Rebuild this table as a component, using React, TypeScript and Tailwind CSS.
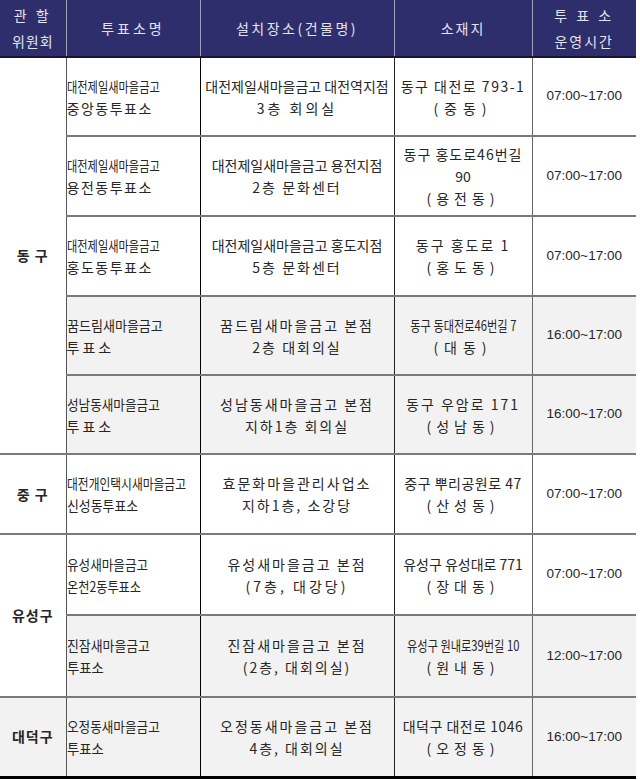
type Line = { t: string; c?: string }

type Row = {
  h: string
  gray?: boolean
  name: Line[]
  place: Line[]
  addr: Line[]
  time: string
}

type Group = { label: string; gray?: boolean; rows: Row[] }

const SQ = "inline-block whitespace-nowrap origin-left scale-x-[0.8]"
const SQ2 = "inline-block whitespace-nowrap origin-left scale-x-[0.9]"
const SQ3 = "inline-block whitespace-nowrap origin-left scale-x-[0.87]"
const WIDE = "inline-block whitespace-nowrap tracking-[1.5px]"

const groups: Group[] = [
  {
    label: "동 구",
    rows: [
      {
        h: "h-[79px]",
        name: [{ t: "대전제일새마을금고", c: SQ }, { t: "중앙동투표소", c: WIDE }],
        place: [{ t: "대전제일새마을금고 대전역지점" }, { t: "3층 회의실", c: "tracking-[3px]" }],
        addr: [{ t: "동구 대전로 793-1", c: "tracking-[1.5px]" }, { t: "(중동)", c: "tracking-[6px]" }],
        time: "07:00~17:00",
      },
      {
        h: "h-[80px]",
        name: [{ t: "대전제일새마을금고", c: SQ }, { t: "용전동투표소", c: WIDE }],
        place: [{ t: "대전제일새마을금고 용전지점" }, { t: "2층 문화센터", c: "tracking-[2px]" }],
        addr: [
          { t: "동구 홍도로46번길", c: "tracking-[1px]" },
          { t: "90" },
          { t: "(용전동)", c: "tracking-[5px]" },
        ],
        time: "07:00~17:00",
      },
      {
        h: "h-[80px]",
        name: [{ t: "대전제일새마을금고", c: SQ }, { t: "홍도동투표소", c: WIDE }],
        place: [{ t: "대전제일새마을금고 홍도지점" }, { t: "5층 문화센터", c: "tracking-[2px]" }],
        addr: [{ t: "동구 홍도로 1", c: "tracking-[2px]" }, { t: "(홍도동)", c: "tracking-[5px]" }],
        time: "07:00~17:00",
      },
      {
        h: "h-[79px]",
        gray: true,
        name: [{ t: "꿈드림새마을금고", c: "inline-block whitespace-nowrap origin-left scale-x-[0.93]" }, { t: "투표소", c: "tracking-[3px]" }],
        place: [{ t: "꿈드림새마을금고 본점", c: "tracking-[2px]" }, { t: "2층 대회의실", c: "tracking-[2px]" }],
        addr: [
          { t: "동구 동대전로46번길 7", c: "inline-block whitespace-nowrap scale-x-[0.8]" },
          { t: "(대동)", c: "tracking-[6px]" },
        ],
        time: "16:00~17:00",
      },
      {
        h: "h-[79px]",
        gray: true,
        name: [{ t: "성남동새마을금고", c: SQ2 }, { t: "투표소", c: "tracking-[3px]" }],
        place: [{ t: "성남동새마을금고 본점", c: "tracking-[2px]" }, { t: "지하1층 회의실", c: "tracking-[2px]" }],
        addr: [{ t: "동구 우암로 171", c: "tracking-[2px]" }, { t: "(성남동)", c: "tracking-[5px]" }],
        time: "16:00~17:00",
      },
    ],
  },
  {
    label: "중 구",
    rows: [
      {
        h: "h-[80px]",
        name: [{ t: "대전개인택시새마을금고", c: "inline-block whitespace-nowrap origin-left scale-x-[0.84]" }, { t: "신성동투표소", c: "inline-block whitespace-nowrap origin-left scale-x-[0.92]" }],
        place: [{ t: "효문화마을관리사업소", c: "tracking-[2px]" }, { t: "지하1층, 소강당", c: "tracking-[2px]" }],
        addr: [{ t: "중구 뿌리공원로 47", c: "tracking-[0.5px]" }, { t: "(산성동)", c: "tracking-[5px]" }],
        time: "07:00~17:00",
      },
    ],
  },
  {
    label: "유성구",
    rows: [
      {
        h: "h-[81px]",
        name: [{ t: "유성새마을금고", c: SQ2 }, { t: "온천2동투표소", c: SQ3 }],
        place: [{ t: "유성새마을금고 본점", c: "tracking-[2px]" }, { t: "(7층, 대강당)", c: "tracking-[3px]" }],
        addr: [{ t: "유성구 유성대로 771", c: "tracking-[0px]" }, { t: "(장대동)", c: "tracking-[5px]" }],
        time: "07:00~17:00",
      },
      {
        h: "h-[82px]",
        gray: true,
        name: [{ t: "진잠새마을금고", c: "inline-block whitespace-nowrap origin-left scale-x-[0.92]" }, { t: "투표소", c: "inline-block whitespace-nowrap origin-left scale-x-[0.95]" }],
        place: [{ t: "진잠새마을금고 본점", c: "tracking-[2px]" }, { t: "(2층, 대회의실)", c: "tracking-[2px]" }],
        addr: [
          { t: "유성구 원내로39번길 10", c: "inline-block whitespace-nowrap scale-x-[0.8]" },
          { t: "(원내동)", c: "tracking-[5px]" },
        ],
        time: "12:00~17:00",
      },
    ],
  },
  {
    label: "대덕구",
    gray: true,
    rows: [
      {
        h: "h-[80px]",
        gray: true,
        name: [{ t: "오정동새마을금고", c: SQ2 }, { t: "투표소", c: "inline-block whitespace-nowrap origin-left scale-x-[0.95]" }],
        place: [{ t: "오정동새마을금고 본점", c: "tracking-[2px]" }, { t: "4층, 대회의실", c: "tracking-[2px]" }],
        addr: [{ t: "대덕구 대전로 1046", c: "tracking-[0.5px]" }, { t: "(오정동)", c: "tracking-[5px]" }],
        time: "16:00~17:00",
      },
    ],
  },
]

function Lines({ lines, left }: { lines: Line[]; left?: boolean }) {
  return (
    <div className={`flex flex-col leading-[22px] ${left ? "items-start" : "items-center"}`}>
      {lines.map((l, i) => (
        <span key={i} className={l.c ?? ""}>
          {l.t}
        </span>
      ))}
    </div>
  )
}

export default function App() {
  return (
    <div className="w-[640px] h-[780px] bg-white text-[#262626] font-['Noto_Sans_CJK_KR',sans-serif] text-[14px]">
      <table className="w-[636px] table-fixed border-collapse">
        <colgroup>
          <col className="w-[66px]" />
          <col className="w-[134px]" />
          <col className="w-[194px]" />
          <col className="w-[138px]" />
          <col className="w-[104px]" />
        </colgroup>
        <thead>
          <tr className="h-[57px] bg-[#2d2e6b] text-[#e4e4ee] text-[14px] leading-[26px]">
            <th className="font-normal border-r border-[#a0a0b8] border-b-2 border-b-[#15153a]">
              <div className="tracking-[3px]">관 할</div>
              <div className="tracking-[1px]">위원회</div>
            </th>
            <th className="font-normal tracking-[3px] border-r border-[#a0a0b8] border-b-2 border-b-[#15153a]">투표소명</th>
            <th className="font-normal tracking-[2.5px] border-r border-[#a0a0b8] border-b-2 border-b-[#15153a]">설치장소(건물명)</th>
            <th className="font-normal tracking-[2px] border-r border-[#a0a0b8] border-b-2 border-b-[#15153a]">소재지</th>
            <th className="font-normal border-b-2 border-b-[#15153a]">
              <div className="tracking-[3px]">투 표 소</div>
              <div className="tracking-[2px]">운영시간</div>
            </th>
          </tr>
        </thead>
        <tbody>
          {groups.map((g, gi) =>
            g.rows.map((r, ri) => {
              const last = gi === groups.length - 1 && ri === g.rows.length - 1
              const bottom = last ? "border-b-[3px] border-b-black" : "border-b-2 border-b-[#7a7a7a]"
              const bg = r.gray ? "bg-[#f2f2f2]" : "bg-white"
              return (
                <tr key={`${gi}-${ri}`} className={r.h}>
                  {ri === 0 && (
                    <td
                      rowSpan={g.rows.length}
                      className={`text-center font-bold text-[14px] tracking-[1px] border-r border-r-[#555] ${
                        last || g.rows.length === 1 ? bottom : "border-b-2 border-b-[#7a7a7a]"
                      } ${g.gray ? "bg-[#f2f2f2]" : "bg-white"}`}
                    >
                      {g.label}
                    </td>
                  )}
                  <td className={`${bg} ${bottom} border-r border-r-black align-middle`}>
                    <Lines lines={r.name} left />
                  </td>
                  <td className={`${bg} ${bottom} border-r border-r-[#222] align-middle`}>
                    <Lines lines={r.place} />
                  </td>
                  <td className={`${bg} ${bottom} border-r border-r-[#666] align-middle`}>
                    <Lines lines={r.addr} />
                  </td>
                  <td className={`${bg} ${bottom} text-center align-middle font-['Liberation_Sans',sans-serif] text-[13.5px]`}>
                    {r.time}
                  </td>
                </tr>
              )
            })
          )}
        </tbody>
      </table>
    </div>
  )
}
